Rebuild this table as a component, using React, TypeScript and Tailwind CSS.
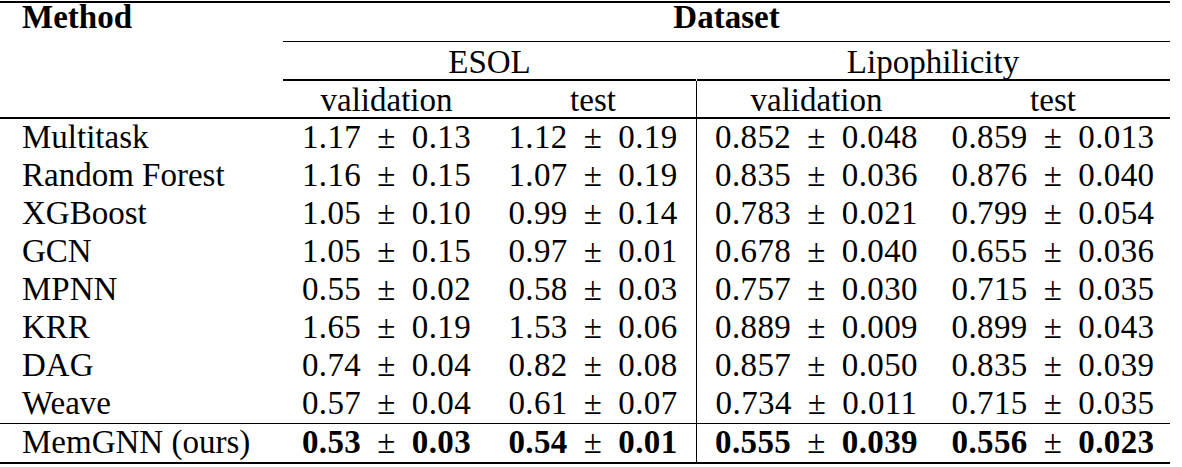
const rows: [string, string[]][] = [
  ["Multitask", ["1.17", "0.13", "1.12", "0.19", "0.852", "0.048", "0.859", "0.013"]],
  ["Random Forest", ["1.16", "0.15", "1.07", "0.19", "0.835", "0.036", "0.876", "0.040"]],
  ["XGBoost", ["1.05", "0.10", "0.99", "0.14", "0.783", "0.021", "0.799", "0.054"]],
  ["GCN", ["1.05", "0.15", "0.97", "0.01", "0.678", "0.040", "0.655", "0.036"]],
  ["MPNN", ["0.55", "0.02", "0.58", "0.03", "0.757", "0.030", "0.715", "0.035"]],
  ["KRR", ["1.65", "0.19", "1.53", "0.06", "0.889", "0.009", "0.899", "0.043"]],
  ["DAG", ["0.74", "0.04", "0.82", "0.08", "0.857", "0.050", "0.835", "0.039"]],
  ["Weave", ["0.57", "0.04", "0.61", "0.07", "0.734", "0.011", "0.715", "0.035"]],
];

const ours = ["0.53", "0.03", "0.54", "0.01", "0.555", "0.039", "0.556", "0.023"];

// cols: Method | ESOL val | ESOL test || Lipo val | Lipo test
const cols = "grid grid-cols-[283px_207px_206px_240px_234px]";

function Val({ m, s, bold }: { m: string; s: string; bold?: boolean }) {
  return (
    <span className="whitespace-nowrap tracking-[0.4px]">
      <span className={bold ? "font-bold" : ""}>{m}</span>
      <span className="px-[16px] font-normal">±</span>
      <span className={bold ? "font-bold" : ""}>{s}</span>
    </span>
  );
}

function DataRow({ name, v, bold, rows }: { name: string; v: string[]; bold?: boolean; rows: string }) {
  return (
    <div className={`${cols} ${rows} leading-[36px]`}>
      <div className="pl-[22px]">{name}</div>
      <div className="text-center">
        <Val m={v[0]} s={v[1]} bold={bold} />
      </div>
      <div className="text-center">
        <Val m={v[2]} s={v[3]} bold={bold} />
      </div>
      <div className="border-l border-black text-center">
        <Val m={v[4]} s={v[5]} bold={bold} />
      </div>
      <div className="text-center">
        <Val m={v[6]} s={v[7]} bold={bold} />
      </div>
    </div>
  );
}

export default function App() {
  return (
    <div className="h-[467px] w-[1182px] overflow-hidden bg-white pt-[1px] font-['Liberation_Serif','Times_New_Roman',serif] text-[33px] text-black">
      <div className="w-[1170px]">
        <div className="h-[2px] bg-black" />

        {/* header */}
        <div className={`${cols} grid-rows-[37.5px] leading-[28px]`}>
          <div className="pl-[22px] font-bold">Method</div>
          <div className="col-span-4 text-center font-bold">Dataset</div>
        </div>
        <div className={cols}>
          <div />
          <div className="col-span-4 h-[1.5px] bg-black" />
        </div>
        <div className={`${cols} grid-rows-[37px] leading-[40px]`}>
          <div />
          <div className="col-span-2 text-center">ESOL</div>
          <div className="col-span-2 text-center">Lipophilicity</div>
        </div>
        <div className={cols}>
          <div />
          <div className="col-span-2 h-[1.5px] bg-black" />
          <div className="col-span-2 ml-[1px] h-[1.5px] bg-black" />
        </div>
        <div className={`${cols} grid-rows-[36.5px] leading-[39px]`}>
          <div />
          <div className="text-center">validation</div>
          <div className="text-center">test</div>
          <div className="border-l border-black text-center">validation</div>
          <div className="text-center">test</div>
        </div>
        <div className="h-[1.5px] bg-black" />

        {rows.map(([name, v]) => (
          <DataRow key={name} name={name} v={v} rows="grid-rows-[38px]" />
        ))}
        <div className="h-[1.5px] bg-black" />
        <DataRow name="MemGNN (ours)" v={ours} bold rows="grid-rows-[37.5px]" />
        <div className="h-[2px] bg-black" />
      </div>
    </div>
  );
}
